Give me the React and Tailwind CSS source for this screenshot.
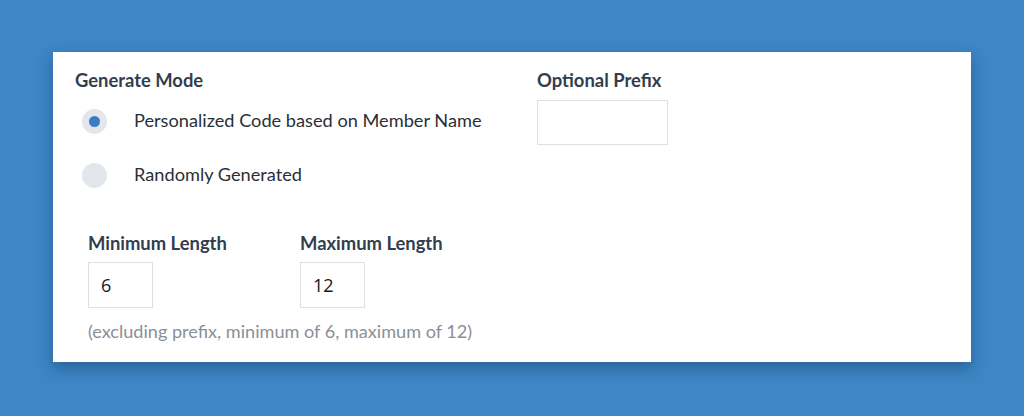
import React from 'react';

const Radio = ({ checked, label }) => (
  <label className="flex items-center h-8 cursor-pointer">
    <span className="w-[25px] h-[25px] rounded-full bg-[#e3e6ea] ml-[7px] flex items-center justify-center">
      {checked && <span className="w-[11px] h-[11px] rounded-full bg-[#3b7dc3]" />}
    </span>
    <span className="ml-[27px] text-[18.2px] text-[#2a2f36]">{label}</span>
  </label>
);

const Field = ({ label, value, width }) => (
  <div className="flex flex-col">
    <span className="text-[18.4px] font-bold leading-6 text-[#333d4d]">{label}</span>
    <input
      readOnly
      value={value}
      className={`mt-[7px] h-[46px] ${width} border border-[#dcdfe3] px-3 text-[18px] text-[#15181c] font-['Open_Sans',sans-serif] outline-none`}
    />
  </div>
);

export default function App() {
  return (
    <div className="h-[416px] w-full bg-[#3e86c6] pt-[52px] pl-[53px] font-['Lato',sans-serif]">
      <div className="w-[918px] h-[310px] bg-white shadow-[0_6px_14px_rgba(20,50,90,0.45)] pl-[22px] pt-4">
        {/* Mode + prefix */}
        <div className="flex">
          <div className="w-[462px]">
            <div className="text-[18.4px] font-bold leading-6 text-[#333d4d]">Generate Mode</div>
            <div className="mt-[13px]">
              <Radio checked label="Personalized Code based on Member Name" />
            </div>
            <div className="mt-[22px]">
              <Radio label="Randomly Generated" />
            </div>
          </div>
          <div className="flex flex-col">
            <span className="text-[18.4px] font-bold leading-6 text-[#333d4d]">Optional Prefix</span>
            <input readOnly value="" className="mt-2 h-[45px] w-[131px] border border-[#dcdfe3] outline-none" />
          </div>
        </div>

        {/* Lengths */}
        <div className="ml-[13px] mt-[40px]">
          <div className="flex">
            <div className="w-[212px]">
              <Field label="Minimum Length" value="6" width="w-[65px]" />
            </div>
            <Field label="Maximum Length" value="12" width="w-[65px]" />
          </div>
          <div className="mt-[11px] text-[18.1px] leading-6 text-[#8a9097]">
            (excluding prefix, minimum of 6, maximum of 12)
          </div>
        </div>
      </div>
    </div>
  );
}
